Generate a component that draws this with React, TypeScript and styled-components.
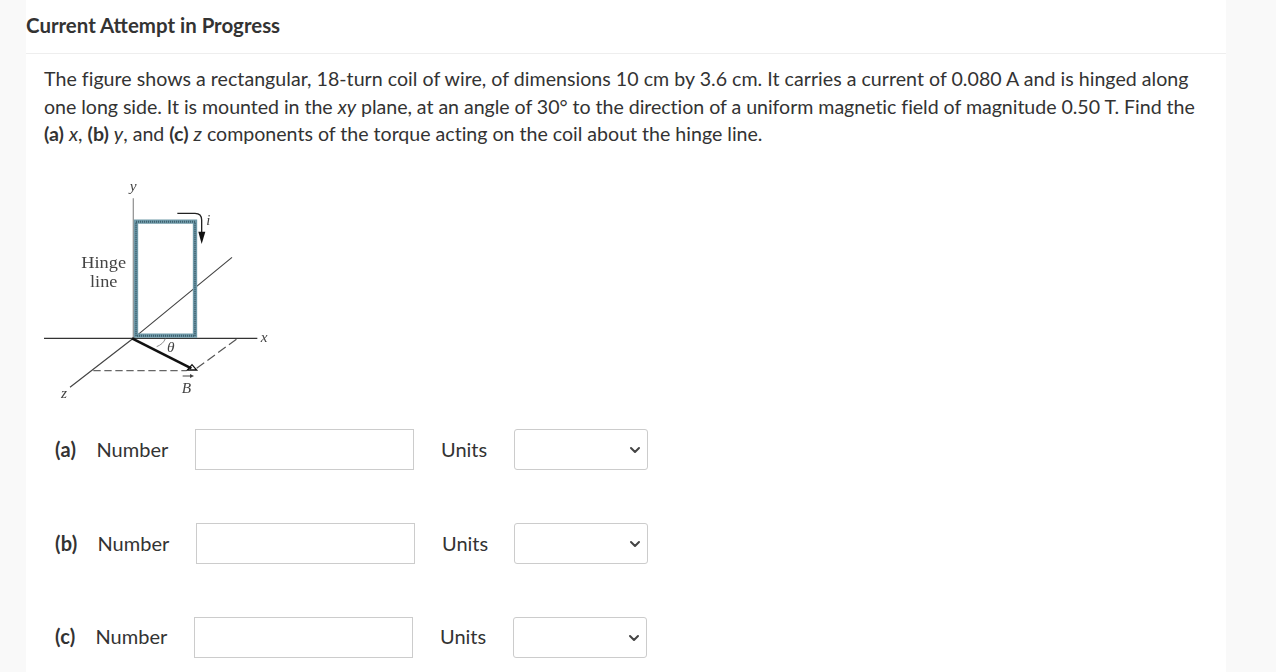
import React from "react";
import styled, { createGlobalStyle } from "styled-components";
import { ChevronDown } from "lucide-react";

const GlobalStyle = createGlobalStyle`
  html, body {
    margin: 0;
    padding: 0;
    height: 672px;
    overflow: hidden;
    background: #f9f9f9;
    font-family: Lato, "Liberation Sans", sans-serif;
    color: #333;
  }
`;

const Card = styled.main`
  width: 1200px;
  height: 672px;
  margin-left: 26px;
  background: #fff;
  overflow: hidden;
`;

const Header = styled.header`
  height: 53px;
  border-bottom: 1px solid #eee;
  display: flex;
  align-items: center;
`;

const Heading = styled.h2`
  margin: 0 0 4px;
  font-size: 20.45px;
  font-weight: 700;
  color: #333;
`;

const Body = styled.section`
  padding: 11px 18px 0;
`;

const Question = styled.p`
  margin: 0;
  font-size: 19.6px;
  line-height: 27.6px;
  color: #333;
  white-space: nowrap;
`;

const QuestionLine = styled.span<{ $spacing: number }>`
  display: block;
  letter-spacing: ${(p) => p.$spacing}px;
`;

const Figure = styled.svg`
  display: block;
  width: 260px;
  height: 240px;
  margin: 22px 0 0 -14px;
  filter: blur(0.35px);
`;

const Answers = styled.div`
  display: flex;
  flex-direction: column;
  gap: 53px;
  margin-top: 19px;
`;

const Row = styled.div<{ $lift: number }>`
  display: flex;
  align-items: center;
  height: 41px;
  margin-left: 11px;
  font-size: 20px;

  & > strong,
  & > span {
    margin-top: ${(p) => -p.$lift}px;
  }
`;

const Part = styled.strong<{ $w: number }>`
  font-weight: 700;
  letter-spacing: 0.3px;
  width: ${(p) => p.$w}px;
  flex: none;
`;

const Label = styled.span<{ $w: number }>`
  width: ${(p) => p.$w}px;
  flex: none;
`;

const NumberInput = styled.input`
  box-sizing: border-box;
  width: 219px;
  height: 41px;
  flex: none;
  border: 1px solid #ccc;
  background: #fff;
  margin-right: 27px;
`;

const SelectWrap = styled.div<{ $gap: number }>`
  position: relative;
  width: 134px;
  height: 41px;
  flex: none;
  margin-left: ${(p) => p.$gap}px;
`;

const UnitSelect = styled.select`
  box-sizing: border-box;
  display: block;
  width: 100%;
  height: 100%;
  appearance: none;
  border: 1px solid #ccc;
  border-radius: 3px;
  background: #fff;
  color: #444;
  font-family: inherit;
  font-size: 16px;
`;

const SelectArrow = styled(ChevronDown)`
  position: absolute;
  top: 13px;
  right: 5px;
  width: 16px;
  height: 16px;
  color: #444;
  stroke-width: 3;
  pointer-events: none;
`;

const rows = [
  { part: "(a)", partWidth: 41.5, selectGap: 26, lift: 1 },
  { part: "(b)", partWidth: 42.5, selectGap: 25, lift: 1 },
  { part: "(c)", partWidth: 40.5, selectGap: 26, lift: 2 },
];

const serif = '"Liberation Serif", serif';

function CoilFigure() {
  return (
    <Figure viewBox="0 0 780 720" aria-label="Coil hinged along the y axis">
      <g fill="none" strokeLinecap="butt">
        <path d="M310 85V505" stroke="#999" strokeWidth="4" />
        <path d="M42 505H682" stroke="#333" strokeWidth="4" />
        <path d="M120 652L310 505L606 262" stroke="#444" strokeWidth="3.5" />
        <path d="M318 155H495V497H318Z" stroke="#6f99a8" strokeWidth="13" />
        <path d="M318 155H495V497H318Z" stroke="#3f626f" strokeWidth="6" strokeDasharray="3 3" />
        <path d="M306 505L484 595" stroke="#111" strokeWidth="8" />
        <path d="M190 602H470" stroke="#666" strokeWidth="3.5" strokeDasharray="22 11" />
        <path d="M500 595L620 507" stroke="#555" strokeWidth="3.5" strokeDasharray="28 12" />
        <path d="M472 600H500L486 584Z" stroke="#111" strokeWidth="4" />
        <path d="M380 530Q400 522 406 506" stroke="#777" strokeWidth="2.5" />
        <path d="M442 130H495Q515 130 515 150V190" stroke="#222" strokeWidth="4" />
        <path d="M458 618H486" stroke="#444" strokeWidth="3" />
      </g>
      <path d="M505 185H526L515 222Z" fill="#111" />
      <path d="M480 612L492 618L480 624Z" fill="#444" />
      <g fontFamily={serif} fill="#444">
        <text x="154" y="293" fontSize="47" textLength="134" lengthAdjust="spacingAndGlyphs">Hinge</text>
        <text x="180" y="351" fontSize="47" textLength="82" lengthAdjust="spacingAndGlyphs">line</text>
        <g fontStyle="italic">
          <text x="299" y="64" fontSize="46">y</text>
          <text x="692" y="516" fontSize="46">x</text>
          <text x="93" y="684" fontSize="46">z</text>
          <text x="529" y="164" fontSize="44">i</text>
          <text x="411" y="545" fontSize="46">θ</text>
          <text x="455" y="668" fontSize="46">B</text>
        </g>
      </g>
    </Figure>
  );
}

export default function App() {
  return (
    <>
      <GlobalStyle />
      <Card>
        <Header>
          <Heading>Current Attempt in Progress</Heading>
        </Header>
        <Body>
          <Question>
            <QuestionLine $spacing={0.022}>
              The figure shows a rectangular, 18-turn coil of wire, of dimensions 10 cm by 3.6 cm. It carries a current of 0.080 A and is hinged along
            </QuestionLine>
            <QuestionLine $spacing={-0.04}>
              one long side. It is mounted in the <em>xy</em> plane, at an angle of 30° to the direction of a uniform magnetic field of magnitude 0.50 T. Find the
            </QuestionLine>
            <QuestionLine $spacing={-0.01}>
              <strong>(a)</strong> <em>x</em>, <strong>(b)</strong> <em>y</em>, and <strong>(c)</strong> <em>z</em> components of the torque acting on the coil about the hinge line.
            </QuestionLine>
          </Question>
          <CoilFigure />
          <Answers>
            {rows.map((r) => (
              <Row key={r.part} $lift={r.lift}>
                <Part $w={r.partWidth}>{r.part}</Part>
                <Label $w={98.5}>Number</Label>
                <NumberInput type="text" />
                <Label $w={47}>Units</Label>
                <SelectWrap $gap={r.selectGap}>
                  <UnitSelect>
                    <option></option>
                  </UnitSelect>
                  <SelectArrow />
                </SelectWrap>
              </Row>
            ))}
          </Answers>
        </Body>
      </Card>
    </>
  );
}
